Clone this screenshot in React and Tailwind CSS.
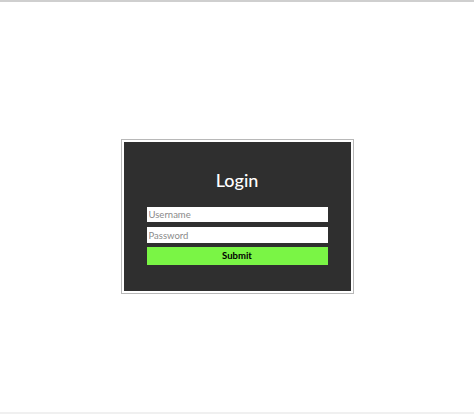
export default function App() {
  const font = { fontFamily: '"Lato", "Noto Sans", sans-serif' };
  return (
    <div className="w-[474px] h-[414px] bg-white border-t-2 border-[#cfcfcf] flex flex-col" style={font}>
      <div className="flex-1 flex justify-center pt-[137px]">
        <div className="w-[233px] h-[155px] border border-[#b8b8b8] p-[2px]">
          <div className="bg-[#2f2f2f] h-full px-[23px] pt-[26px]">
            <h1 className="text-white text-[18px] leading-[24px] text-center font-medium">Login</h1>
            <div className="mt-[15px] flex flex-col">
              <input
                className="h-[15px] bg-white px-[2px] text-[9.5px] text-[#333] placeholder:text-[#8a8a8a] outline-none"
                placeholder="Username"
                style={font}
              />
              <input
                type="password"
                className="mt-[5px] h-[16px] bg-white px-[2px] text-[9.5px] text-[#333] placeholder:text-[#8a8a8a] outline-none"
                placeholder="Password"
                style={font}
              />
              <button
                className="mt-[4px] h-[18px] bg-[#7af545] text-black text-[9.5px] font-bold leading-none"
                style={font}
              >
                Submit
              </button>
            </div>
          </div>
        </div>
      </div>
      <div className="h-[2px] bg-[#f0f0f0]" />
    </div>
  );
}
